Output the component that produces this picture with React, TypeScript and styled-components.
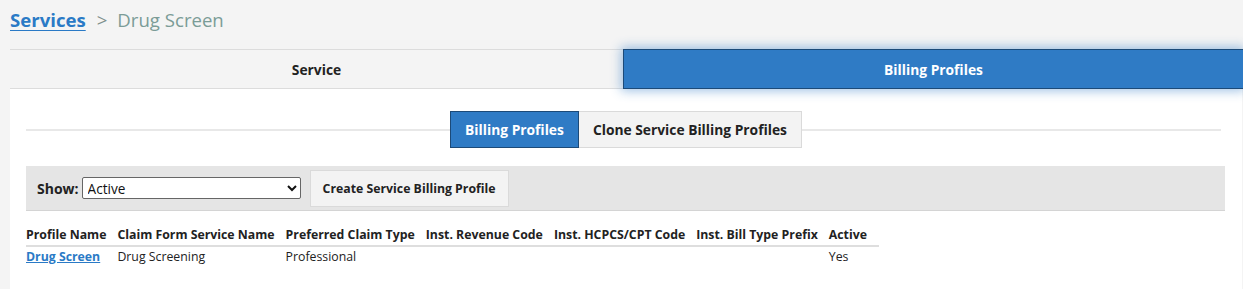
import React, { useState } from 'react';
import styled, { createGlobalStyle } from 'styled-components';

const GlobalStyle = createGlobalStyle`
  html, body {
    margin: 0;
    padding: 0;
    background: #f4f4f4;
    font-family: 'Open Sans', 'Noto Sans', sans-serif;
    color: #222;
  }
`;

type Profile = {
  name: string;
  claimFormName: string;
  claimType: string;
  revenueCode: string;
  hcpcs: string;
  billTypePrefix: string;
  active: string;
};

const columns = [
  'Profile Name',
  'Claim Form Service Name',
  'Preferred Claim Type',
  'Inst. Revenue Code',
  'Inst. HCPCS/CPT Code',
  'Inst. Bill Type Prefix',
  'Active',
];

const profiles: Profile[] = [
  {
    name: 'Drug Screen',
    claimFormName: 'Drug Screening',
    claimType: 'Professional',
    revenueCode: '',
    hcpcs: '',
    billTypePrefix: '',
    active: 'Yes',
  },
];

const App = () => {
  const [tab, setTab] = useState<'service' | 'billing'>('billing');
  const [subTab, setSubTab] = useState<'profiles' | 'clone'>('profiles');
  const [show, setShow] = useState('Active');

  return (
    <Page>
      <GlobalStyle />
      <Breadcrumb>
        <CrumbLink href="#">Services</CrumbLink>
        <Separator>&gt;</Separator>
        <Current>Drug Screen</Current>
      </Breadcrumb>

      <TabBar>
        <Tab active={tab === 'service'} onClick={() => setTab('service')}>
          Service
        </Tab>
        <Tab active={tab === 'billing'} onClick={() => setTab('billing')}>
          Billing Profiles
        </Tab>
      </TabBar>

      <Panel>
        <SubTabRow>
          <SubTabs>
            <SubTab
              active={subTab === 'profiles'}
              onClick={() => setSubTab('profiles')}
            >
              Billing Profiles
            </SubTab>
            <SubTab
              active={subTab === 'clone'}
              onClick={() => setSubTab('clone')}
            >
              Clone Service Billing Profiles
            </SubTab>
          </SubTabs>
        </SubTabRow>

        <Toolbar>
          <ShowLabel>Show:</ShowLabel>
          <Select value={show} onChange={(e) => setShow(e.target.value)}>
            <option>Active</option>
            <option>Inactive</option>
            <option>All</option>
          </Select>
          <ToolButton>Create Service Billing Profile</ToolButton>
        </Toolbar>

        <Table>
          <thead>
            <tr>
              {columns.map((c) => (
                <Th key={c}>{c}</Th>
              ))}
            </tr>
          </thead>
          <tbody>
            {profiles.map((p) => (
              <tr key={p.name}>
                <Td>
                  <RowLink href="#">{p.name}</RowLink>
                </Td>
                <Td>{p.claimFormName}</Td>
                <Td>{p.claimType}</Td>
                <Td>{p.revenueCode}</Td>
                <Td>{p.hcpcs}</Td>
                <Td>{p.billTypePrefix}</Td>
                <Td>{p.active}</Td>
              </tr>
            ))}
          </tbody>
        </Table>
      </Panel>
    </Page>
  );
};

const Page = styled.div`
  padding: 0 1px 0 10px;
  min-height: 289px;
  display: flex;
  flex-direction: column;
`;

const Breadcrumb = styled.div`
  display: flex;
  align-items: baseline;
  height: 49px;
  padding-top: 7px;
  box-sizing: border-box;
  font-size: 18.6px;
  line-height: 26px;
`;

const CrumbLink = styled.a`
  color: #2a7ac6;
  font-weight: 700;
  text-decoration: underline;
  text-underline-offset: 3px;
`;

const Separator = styled.span`
  color: #7d8f8c;
  margin: 0 10px 0 11px;
`;

const Current = styled.span`
  color: #7b9c97;
`;

const TabBar = styled.div`
  display: grid;
  grid-template-columns: 613fr 619fr;
  border-top: 1px solid #dcdcdc;
  border-bottom: 1px solid #dcdcdc;
  height: 38px;
`;

const Tab = styled.div<{ active?: boolean }>`
  display: flex;
  align-items: center;
  justify-content: center;
  font-size: 13.8px;
  font-weight: 700;
  cursor: pointer;
  color: ${(p) => (p.active ? '#fff' : '#222')};
  background: ${(p) => (p.active ? '#2f7bc5' : 'transparent')};
  border: ${(p) => (p.active ? '1px solid #1c4a78' : 'none')};
  border-right: none;
  margin: ${(p) => (p.active ? '-1px -1px -1px 0' : '0')};
  box-shadow: ${(p) =>
    p.active ? '0 0 10px 2px rgba(47, 123, 197, 0.45)' : 'none'};
  position: relative;
  z-index: ${(p) => (p.active ? 1 : 0)};
`;

const Panel = styled.div`
  flex: 1;
  background: #fff;
  padding: 22px 17px 20px 16px;
`;

const SubTabRow = styled.div`
  display: flex;
  justify-content: center;
  position: relative;
  margin-right: 4px;

  &::before {
    content: '';
    position: absolute;
    left: 0;
    right: 0;
    top: 18px;
    border-top: 2px solid #e8e8e8;
  }
`;

const SubTabs = styled.div`
  display: flex;
  position: relative;
  margin-left: 5px;
`;

const SubTab = styled.button<{ active?: boolean }>`
  font-family: inherit;
  font-size: 13.8px;
  font-weight: 700;
  line-height: 19px;
  padding: 8px 14px;
  cursor: pointer;
  color: ${(p) => (p.active ? '#fff' : '#222')};
  background: ${(p) => (p.active ? '#2f7bc5' : '#f3f3f3')};
  border: 1px solid ${(p) => (p.active ? '#1c4a78' : '#dadada')};
  border-left-width: ${(p) => (p.active ? '1px' : '0')};
`;

const Toolbar = styled.div`
  display: flex;
  align-items: center;
  margin-top: 18px;
  height: 45px;
  padding: 0 11px;
  box-sizing: border-box;
  background: #e5e5e5;
  border-bottom: 1px solid #d4d4d4;
`;

const ShowLabel = styled.span`
  font-size: 14px;
  font-weight: 700;
  margin-right: 3px;
`;

const Select = styled.select`
  width: 219px;
  height: 22px;
  font-family: inherit;
  font-size: 13.6px;
  color: #111;
  background: #fff;
  border: 1px solid #666;
  border-radius: 2px;
  padding: 0 1px;
`;

const ToolButton = styled.button`
  margin-left: 9px;
  height: 37px;
  padding: 0 12px;
  font-family: inherit;
  font-size: 12.3px;
  font-weight: 700;
  color: #222;
  background: #f3f3f3;
  border: 1px solid #dadada;
  cursor: pointer;
`;

const Table = styled.table`
  margin-top: 14px;
  border-collapse: collapse;
  font-size: 12.3px;
`;

const Th = styled.th`
  text-align: left;
  font-weight: 700;
  padding: 1px 11px 1px 0;
  line-height: 18px;
  border-bottom: 2px solid #dedede;
  white-space: nowrap;
  &:last-child {
    padding-right: 12px;
  }
`;

const Td = styled.td`
  padding: 1px 11px 0 0;
  line-height: 18px;
  white-space: nowrap;
`;

const RowLink = styled.a`
  color: #2a7ac6;
  font-weight: 700;
  text-decoration: underline;
`;

export default App;
